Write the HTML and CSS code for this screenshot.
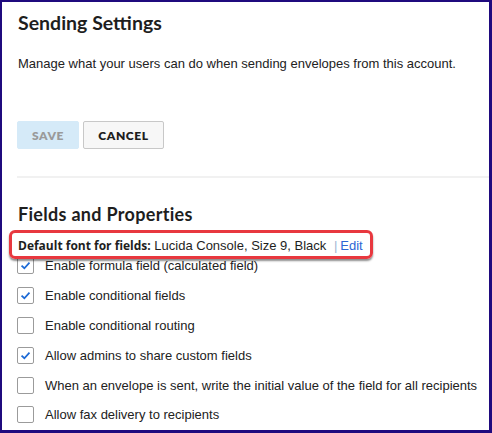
FILE: index.html
```html
<!DOCTYPE html>
<html>
<head>
<meta charset="utf-8">
<link rel="stylesheet" href="styles.css">
</head>
<body>
<div class="frame">
  <div class="page">
    <h1 class="title">Sending Settings</h1>
    <p class="desc">Manage what your users can do when sending envelopes from this account.</p>
    <div class="actions">
      <button class="btn btn-save">SAVE</button>
      <button class="btn btn-cancel">CANCEL</button>
    </div>
    <div class="divider"></div>
    <h2 class="section">Fields and Properties</h2>
    <div class="font-row"><b>Default font for fields:</b> Lucida Console, Size 9, Black <span class="sep">|</span><a class="edit">Edit</a></div>
    <ul class="checks">
      <li><span class="box on"><svg viewBox="0 0 17 17"><path d="M4 8.6 L7.2 11.6 L13 5.2" /></svg></span>Enable formula field (calculated field)</li>
      <li><span class="box on"><svg viewBox="0 0 17 17"><path d="M4 8.6 L7.2 11.6 L13 5.2" /></svg></span>Enable conditional fields</li>
      <li><span class="box"></span>Enable conditional routing</li>
      <li><span class="box on"><svg viewBox="0 0 17 17"><path d="M4 8.6 L7.2 11.6 L13 5.2" /></svg></span>Allow admins to share custom fields</li>
      <li><span class="box"></span>When an envelope is sent, write the initial value of the field for all recipients</li>
      <li><span class="box"></span>Allow fax delivery to recipients</li>
    </ul>
  </div>
  <div class="highlight"></div>
</div>
</body>
</html>
```

FILE: styles.css
```css
html, body {
  margin: 0;
  padding: 0;
  background: #fff;
}
.frame {
  position: relative;
  width: 492px;
  height: 433px;
  box-sizing: border-box;
  border-style: solid;
  border-color: #1f0a7e;
  border-width: 2px 3px 3px 2px;
  overflow: hidden;
  background: #fff;
}
.page {
  padding: 7px 0 0 16px;
  font-family: "Liberation Sans", Arial, sans-serif;
  color: #222;
}
.title {
  margin: 0;
  font-family: Lato, "Noto Sans", sans-serif;
  font-weight: 700;
  font-size: 19.5px;
  line-height: 28px;
  color: #1e1e1e;
  letter-spacing: 0;
}
.desc {
  margin: 18px 0 0;
  font-size: 13px;
  line-height: 18px;
}
.actions {
  display: flex;
  gap: 4px;
  margin: 48px 0 0 -1px;
}
.btn {
  font-family: Lato, "Noto Sans", sans-serif;
  font-weight: 800;
  font-size: 12px;
  letter-spacing: 0.6px;
  border-radius: 2px;
  box-sizing: border-box;
  height: 28px;
  padding: 0;
}
.btn-save {
  width: 62px;
  background: #d5eaf8;
  color: #9a9a9a;
  border: 1px solid #d5eaf8;
}
.btn-cancel {
  width: 81px;
  background: #f7f7f7;
  color: #1e1e1e;
  border: 1px solid #c8c8c8;
}
.divider {
  margin: 27px 0 0 -1px;
  height: 2px;
  background: #f1f1f1;
}
.section {
  margin: 25px 0 0;
  font-family: Lato, "Noto Sans", sans-serif;
  font-weight: 700;
  font-size: 18px;
  line-height: 22px;
  color: #1e1e1e;
  letter-spacing: 0.3px;
}
.font-row {
  margin-top: 13px;
  font-size: 13px;
  line-height: 16px;
  color: #1e1e1e;
}
.font-row b {
  font-family: "Open Sans", "Noto Sans", sans-serif;
  font-weight: 700;
  font-size: 12px;
}
.sep {
  color: #9fb6d3;
  margin: 0 3px 0 4px;
}
.edit {
  color: #2d66d4;
}
.checks {
  list-style: none;
  margin: -3px 0 0;
  padding: 0;
}
.checks li {
  display: flex;
  align-items: center;
  height: 29.8px;
  font-size: 13px;
  color: #222;
}
.box {
  width: 17px;
  height: 17px;
  box-sizing: border-box;
  border: 1px solid #9b9b9b;
  border-radius: 2px;
  margin: 0 11px 0 -1px;
  display: flex;
  align-items: center;
  justify-content: center;
  background: #fff;
}
.box svg {
  width: 15px;
  height: 15px;
}
.box path {
  fill: none;
  stroke: #1d6ad5;
  stroke-width: 2;
}
.highlight {
  position: absolute;
  left: 7px;
  top: 228px;
  width: 364px;
  height: 29px;
  box-sizing: border-box;
  border: 3px solid #e8383f;
  border-radius: 6px;
  box-shadow: 0 2px 2px rgba(0,0,0,0.45);
}
```
